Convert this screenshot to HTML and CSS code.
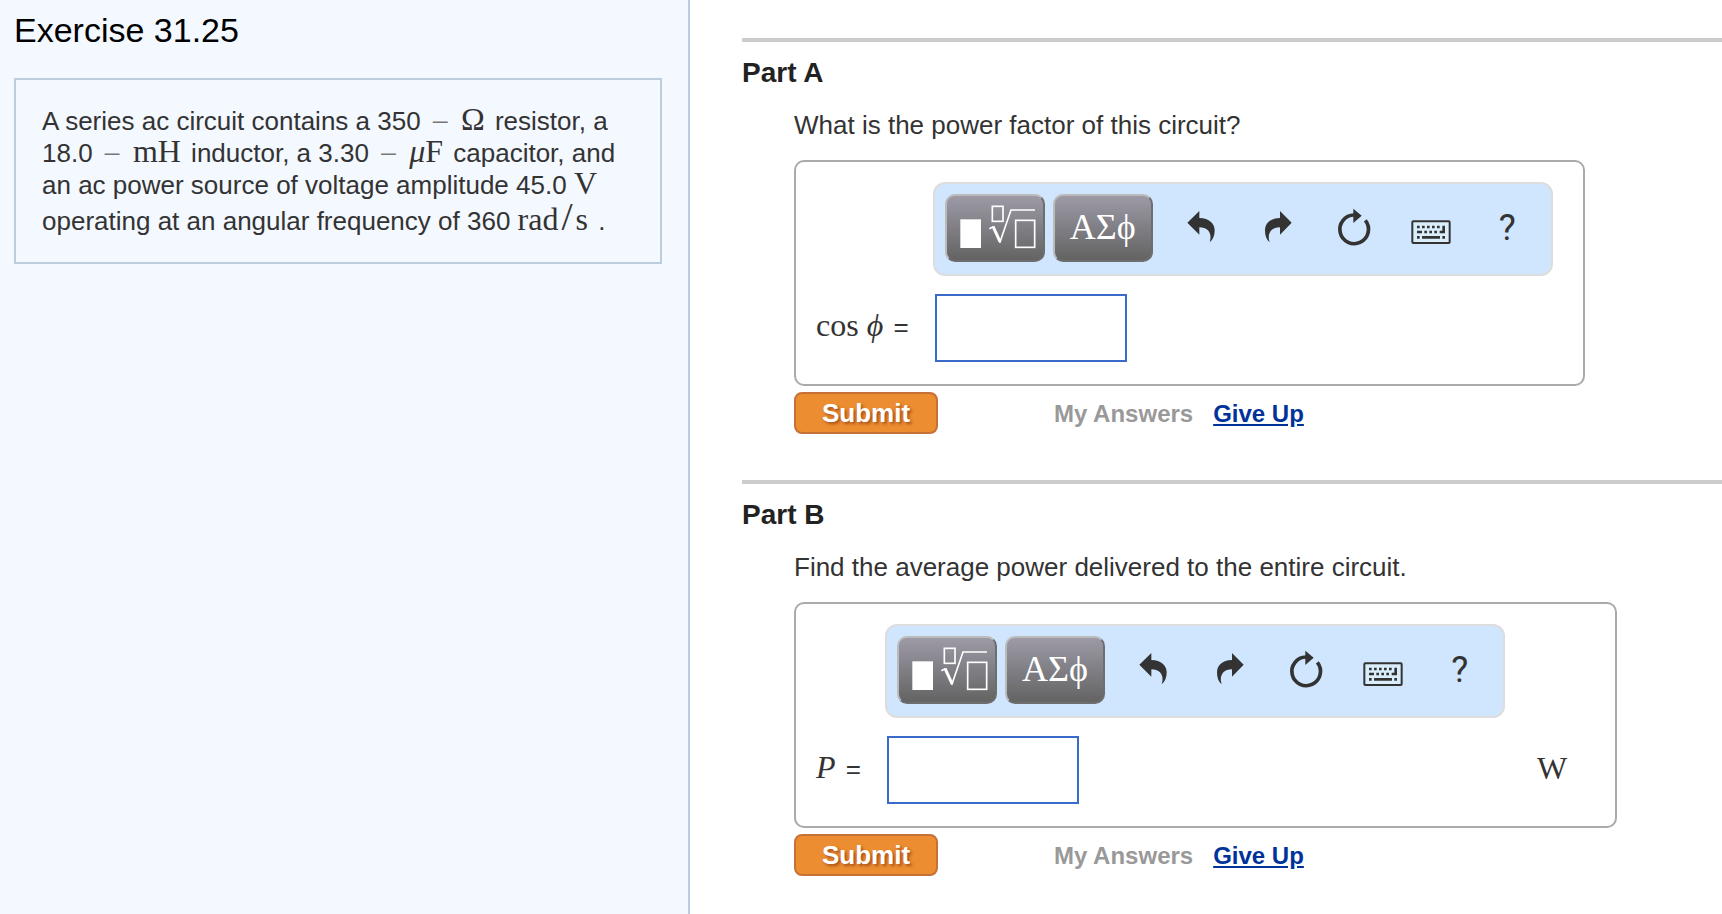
FILE: index.html
```
<!DOCTYPE html>
<html lang="en">
<head>
    <meta charset="UTF-8">
    <meta name="viewport" content="width=device-width, initial-scale=1.0">
    <title>Exercise 31.25</title>
    <link rel="stylesheet" href="styles.css">
</head>
<body>
    <!-- icons shared by both toolbars -->
    <svg class="icon-defs" aria-hidden="true">
        <symbol id="icon-template" viewBox="99 101 246 144">
            <rect x="118" y="150" width="62" height="86" fill="#fff"/>
            <g fill="none" stroke="#fff">
                <rect x="214" y="111" width="32" height="45" stroke-width="5"/>
                <rect x="284" y="153" width="57" height="81" stroke-width="5"/>
                <path d="M205 178L217 172" stroke-width="5"/>
                <path d="M216 171L237 217" stroke-width="9"/>
                <path d="M236 221L270 122H342" stroke-width="5"/>
            </g>
        </symbol>
        <symbol id="icon-undo" viewBox="781 117 120 120">
            <path d="M800 161L836 126V147C866 148 882 163 882 184C882 200 877 212 867 220C872 205 870 193 862 184C856 178 846 175 836 175V197Z"/>
        </symbol>
        <symbol id="icon-redo" viewBox="292 117 120 120">
            <path d="M393 161L358 126V147C328 148 313 163 313 184C313 200 317 212 327 220C322 205 324 193 332 184C338 178 347 175 358 175V197Z"/>
        </symbol>
        <symbol id="icon-reset" viewBox="522 117 120 120">
            <path d="M616 154A43 43 0 1 1 582 138" fill="none" stroke="#333" stroke-width="11"/>
            <path d="M580 119L605 140L580 162Z"/>
        </symbol>
        <symbol id="icon-keyboard" viewBox="750 117 120 120">
            <rect x="754" y="157" width="112" height="65" rx="3" fill="#d9edfa" stroke="#333" stroke-width="6"/>
            <path d="M768 170h8v8h-8zM783 170h8v8h-8zM798 170h8v8h-8zM813 170h8v8h-8zM828 170h8v8h-8zM844 170h8v23h-16v-8h8zM768 185h15v8h-15zM790 185h8v8h-8zM805 185h8v8h-8zM820 185h8v8h-8zM768 201h8v8h-8zM783 201h54v8h-54zM844 201h8v8h-8z"/>
        </symbol>
    </svg>

    <div class="page">
        <aside class="sidebar">
            <h1 class="title">Exercise 31.25</h1>
            <p class="problem">
                A series ac circuit contains a 350 <span class="math minus">−</span><span class="math">Ω</span> resistor, a<br>
                18.0 <span class="math minus">−</span><span class="math">mH</span> inductor, a 3.30 <span class="math minus">−</span><span class="math"><i>μ</i>F</span> capacitor, and<br>
                an ac power source of voltage amplitude 45.0 <span class="math">V</span><br>
                operating at an angular frequency of 360 <span class="math">rad<span class="slash">/</span>s</span> .
            </p>
        </aside>

        <main class="content">
            <section class="part">
                <h2 class="part-title">Part A</h2>
                <div class="part-body">
                    <p class="question">What is the power factor of this circuit?</p>
                    <form onsubmit="return false">
                        <div class="answer-box">
                            <div class="toolbar">
                                <button type="button" class="tool-key" aria-label="Templates"><svg class="template"><use href="#icon-template"/></svg></button>
                                <button type="button" class="tool-key">ΑΣϕ</button>
                                <div class="tool-icons">
                                    <button type="button" class="tool-icon" aria-label="Undo"><svg class="icon"><use href="#icon-undo"/></svg></button>
                                    <button type="button" class="tool-icon" aria-label="Redo"><svg class="icon"><use href="#icon-redo"/></svg></button>
                                    <button type="button" class="tool-icon" aria-label="Reset"><svg class="icon"><use href="#icon-reset"/></svg></button>
                                    <button type="button" class="tool-icon" aria-label="Keyboard shortcuts"><svg class="icon"><use href="#icon-keyboard"/></svg></button>
                                    <button type="button" class="tool-icon">?</button>
                                </div>
                            </div>
                            <label class="answer-label" for="answerA"><span class="math">cos <i>ϕ</i></span> =</label>
                            <input class="answer-input" id="answerA" type="text">
                        </div>
                        <div class="actions">
                            <button type="submit" class="submit">Submit</button>
                            <a class="my-answers">My Answers</a>
                            <a class="give-up" href="#">Give Up</a>
                        </div>
                    </form>
                </div>
            </section>

            <section class="part">
                <h2 class="part-title">Part B</h2>
                <div class="part-body">
                    <p class="question">Find the average power delivered to the entire circuit.</p>
                    <form onsubmit="return false">
                        <div class="answer-box">
                            <div class="toolbar">
                                <button type="button" class="tool-key" aria-label="Templates"><svg class="template"><use href="#icon-template"/></svg></button>
                                <button type="button" class="tool-key">ΑΣϕ</button>
                                <div class="tool-icons">
                                    <button type="button" class="tool-icon" aria-label="Undo"><svg class="icon"><use href="#icon-undo"/></svg></button>
                                    <button type="button" class="tool-icon" aria-label="Redo"><svg class="icon"><use href="#icon-redo"/></svg></button>
                                    <button type="button" class="tool-icon" aria-label="Reset"><svg class="icon"><use href="#icon-reset"/></svg></button>
                                    <button type="button" class="tool-icon" aria-label="Keyboard shortcuts"><svg class="icon"><use href="#icon-keyboard"/></svg></button>
                                    <button type="button" class="tool-icon">?</button>
                                </div>
                            </div>
                            <label class="answer-label" for="answerB"><span class="math"><i>P</i></span> =</label>
                            <input class="answer-input" id="answerB" type="text">
                            <span class="math unit">W</span>
                        </div>
                        <div class="actions">
                            <button type="submit" class="submit">Submit</button>
                            <a class="my-answers">My Answers</a>
                            <a class="give-up" href="#">Give Up</a>
                        </div>
                    </form>
                </div>
            </section>
        </main>
    </div>
</body>
</html>
```
FILE: styles.css
```
* {
    box-sizing: border-box;
}
body {
    margin: 0;
    font-family: "Liberation Sans", Arial, sans-serif;
    font-size: 26px;
    line-height: 32px;
    color: #333;
    background-color: #fff;
}
h1, h2, p {
    margin: 0;
}
.icon-defs {
    display: none;
}
.page {
    display: flex;
    min-height: 100vh;
}

/* Left column */
.sidebar {
    flex: 0 0 41%;
    max-width: 690px;
    padding: 10px 26px 0 14px;
    background-color: #f4f8ff;
    border-right: 2px solid #bccde0;
}
.title {
    font-size: 34px;
    font-weight: normal;
    line-height: 40px;
    color: #000;
}
.problem {
    margin-top: 28px;
    padding: 25px 26px;
    border: 2px solid #bccde0;
}
.math {
    margin-right: 3px;
    font-family: "Liberation Serif", "Times New Roman", serif;
    font-size: 32px;
    line-height: 0;
}
.minus {
    margin: 0 12px 0 3px;
    vertical-align: -3px;
    color: #777;
}
.slash {
    margin: 0 3px;
    font-size: 40px;
    line-height: 31px;
}

/* Right column */
.content {
    flex: 1;
    padding: 38px 0 0 52px;
}
.part {
    padding-bottom: 46px;
    border-top: 4px solid #ccc;
}
.part-title {
    padding-top: 15px;
    font-size: 28px;
    color: #222;
}
.part-body {
    padding: 20px 0 0 52px;
}
.question {
    margin-bottom: 19px;
}
.answer-box {
    display: grid;
    grid-template-columns: auto 620px auto;
    align-items: center;
    column-gap: 24px;
    row-gap: 18px;
    width: fit-content;
    padding: 20px 6px 22px 20px;
    border: 2px solid #aaa;
    border-radius: 10px;
}
.toolbar {
    grid-column: 2;
    display: flex;
    gap: 8px;
    padding: 10px 5px 12px 10px;
    background-color: #d0e5fe;
    border: 2px solid #ddd;
    border-radius: 12px;
}
.tool-key {
    display: flex;
    flex: 0 0 100px;
    justify-content: center;
    align-items: center;
    height: 68px;
    padding: 0 0 2px;
    font-family: "Liberation Serif", "Times New Roman", serif;
    font-size: 36px;
    color: #fff;
    background: linear-gradient(#9d9aa6, #636363);
    border: 2px solid;
    border-color: #bbb #6e6e6e #6e6e6e #bbb;
    border-radius: 10px;
}
.template {
    width: 82px;
    height: 48px;
}
.tool-icons {
    display: flex;
    flex: 1;
    margin-left: 2px;
}
.tool-icon {
    display: flex;
    flex: 1;
    justify-content: center;
    align-items: center;
    padding: 0;
    font-family: Roboto, sans-serif;
    font-size: 36px;
    color: #333;
    background: none;
    border: none;
}
.icon {
    width: 40px;
    height: 40px;
    fill: #333;
}
.answer-label {
    grid-column: 1;
    padding-bottom: 3px;
    white-space: nowrap;
}
.answer-input {
    width: 192px;
    height: 68px;
    margin-left: 2px;
    padding: 0 10px;
    font: inherit;
    background-color: #fff;
    border: 2px solid #386bca;
}
.unit {
    margin: 0 42px 0 8px;
    padding-bottom: 4px;
}
.actions {
    display: flex;
    align-items: center;
    margin-top: 6px;
    font-size: 24px;
    font-weight: bold;
}
.actions a {
    padding-top: 2px;
}
.submit {
    width: 144px;
    height: 42px;
    margin-right: 116px;
    padding: 0;
    font-family: inherit;
    font-size: 26px;
    font-weight: bold;
    color: #fff;
    text-shadow: 2px 2px 3px #a8501c;
    background-color: #eb8d30;
    border: 2px solid #c67137;
    border-radius: 8px;
}
.my-answers {
    margin-right: 20px;
    color: #999;
}
.give-up {
    color: #039;
}
.submit:hover, .tool-key:hover {
    cursor: pointer;
}
```
